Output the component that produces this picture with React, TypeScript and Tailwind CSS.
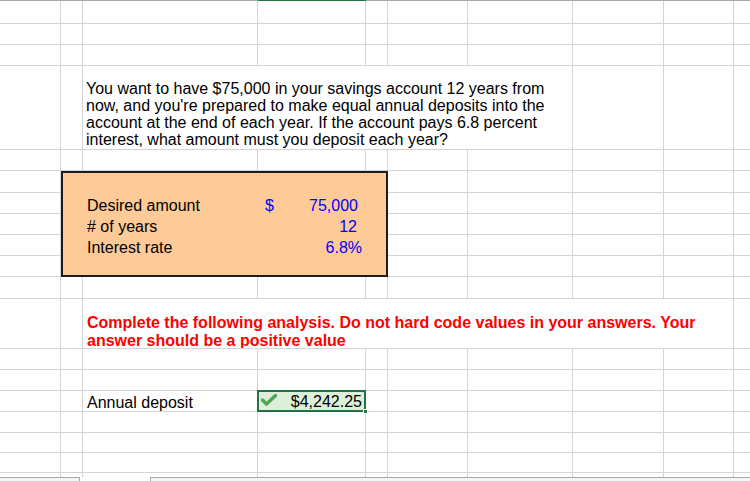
import React from 'react';

// column widths (px) and row heights (px) of the visible sheet area
const colWidths = [61, 22, 175, 108, 22, 80, 105, 91, 70, 40];
const rowHeights = [23, 21, 21, 84, 21, 22, 21, 21, 21, 21, 22, 50, 21, 21, 21, 21, 20, 20, 4];

type Region = { r: number; c: number; rs: number; cs: number; key: string };

const regions: Region[] = [
  { r: 3, c: 2, rs: 1, cs: 5, key: 'question' },
  { r: 5, c: 1, rs: 5, cs: 4, key: 'box' },
  { r: 11, c: 2, rs: 1, cs: 7, key: 'task' },
  { r: 14, c: 2, rs: 1, cs: 1, key: 'label' },
  { r: 14, c: 3, rs: 1, cs: 1, key: 'answer' },
];

const covered = (r: number, c: number) =>
  regions.some(g => r >= g.r && r < g.r + g.rs && c >= g.c && c < g.c + g.cs);

const CheckMark = () => (
  <svg width="16" height="12" viewBox="0 0 16 12">
    <path d="M1.5 6 L5.5 10 L14.5 1.5" fill="none" stroke="#52a35a" strokeWidth="3.4" strokeLinecap="round" strokeLinejoin="round" />
  </svg>
);

const Question = () => (
  <div className="flex h-full items-end border-r border-b border-[#d4d4d4] pl-[3px] pb-[1px]">
    <p className="text-[16px] leading-[17px] text-black">
      You want to have $75,000 in your savings account 12 years from now, and you're prepared to make equal annual
      deposits into the account at the end of each year. If the account pays 6.8 percent interest, what amount must you
      deposit each year?
    </p>
  </div>
);

const InputBox = () => (
  <div className="h-full border-2 border-[#1c1c1c] bg-[#fdca98]">
    <div className="grid grid-cols-[20px_175px_108px_20px] grid-rows-[20px_21px_21px_21px] text-[16px] leading-[17px]">
      <div className="col-span-4" />
      <div />
      <div className="flex items-end pl-[4px]">Desired amount</div>
      <div className="flex items-end justify-between pl-[7px] pr-[8px] text-[#0000ff]">
        <span>$</span>
        <span>75,000</span>
      </div>
      <div />
      <div />
      <div className="flex items-end pl-[4px]"># of years</div>
      <div className="flex items-end justify-end pr-[9px] text-[#0000ff]">12</div>
      <div />
      <div />
      <div className="flex items-end pl-[4px]">Interest rate</div>
      <div className="flex items-end justify-end pr-[4px] text-[#0000ff]">6.8%</div>
      <div />
    </div>
  </div>
);

const Task = () => (
  <div className="flex h-full items-end overflow-hidden border-r border-b border-[#d4d4d4] pl-[4px]">
    <p className="-mb-[2px] text-[16px] font-bold leading-[18px] text-[#ff0000]">
      Complete the following analysis. Do not hard code values in your answers. Your answer should be a positive value
    </p>
  </div>
);

const Answer = () => (
  <div className="relative h-full border-r border-b border-[#d4d4d4]">
    <div className="absolute -top-[1px] -left-[1px] -right-[1px] -bottom-[1px] flex items-end justify-between border-2 border-[#217346] bg-[#dcefd9] pl-[2px] pr-[2px]">
      <span className="mb-[4px]"><CheckMark /></span>
      <span className="text-[16px] leading-[17px] text-black">$4,242.25</span>
    </div>
    <div className="absolute -right-[3px] -bottom-[3px] h-[5px] w-[5px] border border-white bg-[#217346]" />
  </div>
);

const renderRegion = (key: string) => {
  switch (key) {
    case 'question':
      return <Question />;
    case 'box':
      return <InputBox />;
    case 'task':
      return <Task />;
    case 'label':
      return (
        <div className="flex h-full items-end border-r border-b border-[#d4d4d4] pl-[4px] text-[16px] leading-[17px]">
          Annual deposit
        </div>
      );
    case 'answer':
      return <Answer />;
    default:
      return null;
  }
};

export default function App() {
  const cells: React.ReactNode[] = [];
  rowHeights.forEach((_, r) => {
    colWidths.forEach((__, c) => {
      const region = regions.find(g => g.r === r && g.c === c);
      if (region) {
        cells.push(
          <div
            key={region.key}
            style={{ gridRow: `${r + 1} / span ${region.rs}`, gridColumn: `${c + 1} / span ${region.cs}` }}
          >
            {renderRegion(region.key)}
          </div>
        );
      } else if (!covered(r, c)) {
        cells.push(
          <div
            key={`${r}-${c}`}
            style={{ gridRow: r + 1, gridColumn: c + 1 }}
            className={r === rowHeights.length - 1 ? 'border-r border-[#d4d4d4]' : 'border-r border-b border-[#d4d4d4]'}
          />
        );
      }
    });
  });

  return (
    <div className="h-[481px] w-[750px] overflow-hidden bg-white font-['Liberation_Sans',Arial,sans-serif] text-black">
      <div className="flex h-[1px]">
        <div className="w-[258px] bg-[#a9a9a9]" />
        <div className="w-[108px] bg-[#217346]" />
        <div className="flex-1 bg-[#a9a9a9]" />
      </div>
      <div className="grid grid-cols-[61px_22px_175px_108px_22px_80px_105px_91px_70px_40px] grid-rows-[23px_21px_21px_84px_21px_22px_21px_21px_21px_21px_22px_50px_21px_21px_21px_21px_20px_20px_4px]">
        {cells}
      </div>
      <div className="flex h-[4px]">
        <div className="w-[80px] border-t border-r border-[#a9a9a9] bg-[#f4f4f4]" />
        <div className="w-[70px]" />
        <div className="flex-1 border-t border-l border-[#a9a9a9] bg-[#f4f4f4]" />
      </div>
    </div>
  );
}
